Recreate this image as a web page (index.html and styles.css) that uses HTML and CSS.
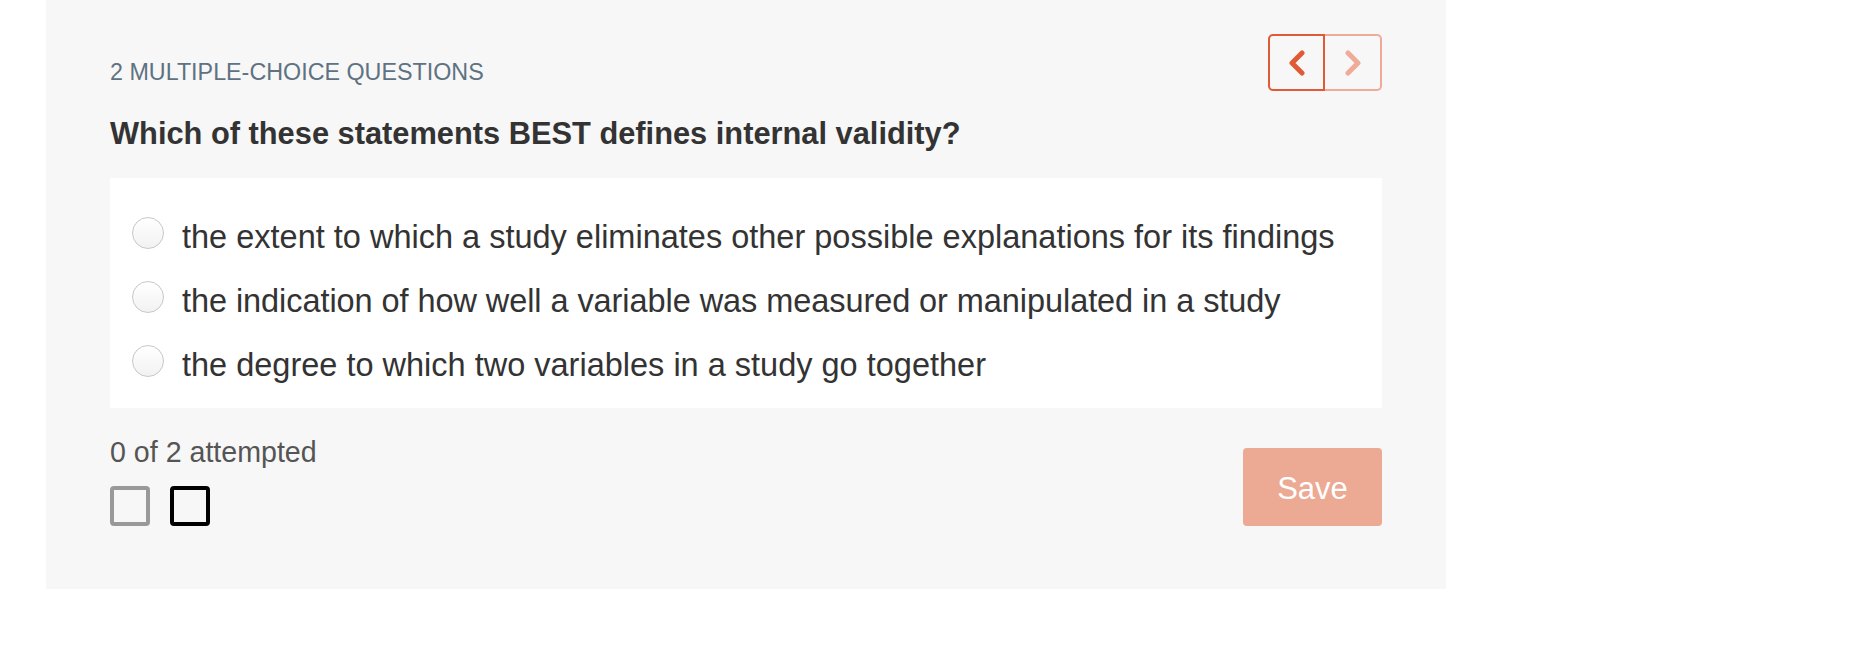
FILE: index.html
```html
<!DOCTYPE html>
<html lang="en">
<head>
<meta charset="utf-8">
<title>Multiple-choice questions</title>
<link rel="stylesheet" href="styles.css">
</head>
<body>
<div class="panel">
  <div class="head-row">
    <div class="kicker">2 MULTIPLE-CHOICE QUESTIONS</div>
    <div class="nav">
      <button class="nav-btn prev" type="button" aria-label="Previous">
        <svg width="16" height="26" viewBox="0 0 16 26"><polyline points="13,3 3,13 13,23" fill="none" stroke="#e05a35" stroke-width="5" stroke-linecap="round" stroke-linejoin="round"/></svg>
      </button>
      <button class="nav-btn next" type="button" aria-label="Next">
        <svg width="16" height="26" viewBox="0 0 16 26"><polyline points="3,3 13,13 3,23" fill="none" stroke="#f0aa98" stroke-width="5" stroke-linecap="round" stroke-linejoin="round"/></svg>
      </button>
    </div>
  </div>
  <h2 class="question">Which of these statements BEST defines internal validity?</h2>
  <div class="options">
    <label class="option"><span class="radio"></span><span class="opt-text">the extent to which a study eliminates other possible explanations for its findings</span></label>
    <label class="option"><span class="radio"></span><span class="opt-text">the indication of how well a variable was measured or manipulated in a study</span></label>
    <label class="option"><span class="radio"></span><span class="opt-text">the degree to which two variables in a study go together</span></label>
  </div>
  <div class="foot-row">
    <div class="progress">
      <div class="attempted">0 of 2 attempted</div>
      <div class="boxes">
        <span class="qbox"></span>
        <span class="qbox current"></span>
      </div>
    </div>
    <button class="save" type="button">Save</button>
  </div>
</div>
</body>
</html>
```

FILE: styles.css
```css
* { box-sizing: border-box; }
html, body { margin: 0; padding: 0; background: #ffffff; }
body { font-family: "Liberation Sans", Arial, Helvetica, sans-serif; }

.panel {
  margin-left: 46px;
  width: 1400px;
  height: 589px;
  background: #f7f7f7;
  padding: 34px 64px 0 64px;
}

.head-row {
  display: flex;
  justify-content: space-between;
  align-items: flex-start;
  height: 57px;
}

.kicker {
  margin-top: 24px;
  font-size: 23.3px;
  line-height: 28px;
  color: #5e7282;
}

.nav { display: flex; }
.nav-btn {
  width: 57px;
  height: 57px;
  padding: 0;
  margin: 0;
  background: transparent;
  display: flex;
  align-items: center;
  justify-content: center;
  cursor: pointer;
}
.nav-btn.prev {
  border: 2px solid #e05a35;
  border-radius: 5px 0 0 5px;
}
.nav-btn.next {
  border: 2px solid #f0aa98;
  border-left: none;
  border-radius: 0 5px 5px 0;
}
.nav-btn svg { display: block; }

.question {
  margin: 25px 0 0 0;
  font-size: 30.8px;
  line-height: 36px;
  font-weight: bold;
  color: #333333;
}

.options {
  margin-top: 26px;
  background: #ffffff;
  height: 230px;
  padding: 39px 22px 0 22px;
  display: flex;
  flex-direction: column;
  gap: 24px;
}

.option {
  display: flex;
  align-items: flex-start;
  gap: 18px;
  font-size: 32.5px;
  line-height: 40px;
  color: #333333;
}
.option:nth-child(2) .opt-text { letter-spacing: -0.07px; }

.radio {
  flex: none;
  width: 32px;
  height: 32px;
  border-radius: 50%;
  border: 1px solid #c8c8c8;
  background: linear-gradient(#ffffff, #f2f2f2);
}

.foot-row {
  display: flex;
  justify-content: space-between;
  align-items: flex-end;
  margin-top: 27px;
}

.attempted {
  font-size: 28.6px;
  line-height: 34px;
  color: #555555;
}

.boxes {
  display: flex;
  gap: 20px;
  margin-top: 17px;
}
.qbox {
  width: 40px;
  height: 40px;
  border: 4px solid #999999;
  border-radius: 4px;
}
.qbox.current { border-color: #000000; }

.save {
  width: 139px;
  height: 78px;
  border: none;
  border-radius: 4px;
  background: #eca994;
  color: #ffffff;
  font-family: "Liberation Sans", Arial, Helvetica, sans-serif;
  font-size: 31px;
  padding: 4px 0 0 0;
  margin: 0;
}
```
